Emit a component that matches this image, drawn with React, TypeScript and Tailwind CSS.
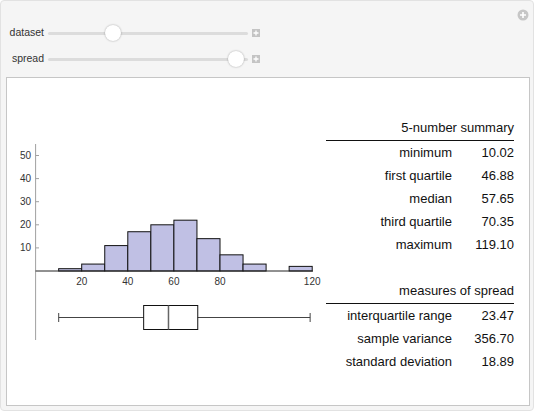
import React from 'react';

// histogram counts per bin of width 10, starting at 10
const counts = [1, 3, 11, 17, 20, 22, 14, 7, 3, 0, 2];

const xs = (v: number) => 35.6 + v * 2.305;
const ys = (v: number) => 271 - v * 2.31;

const summary = [
  ['minimum', '10.02'],
  ['first quartile', '46.88'],
  ['median', '57.65'],
  ['third quartile', '70.35'],
  ['maximum', '119.10'],
];

const spread = [
  ['interquartile range', '23.47'],
  ['sample variance', '356.70'],
  ['standard deviation', '18.89'],
];

const Slider: React.FC<{ label: string; pos: number }> = ({ label, pos }) => (
  <div className="flex items-center h-[26px]">
    <div className="w-[43px] text-right text-[10.5px] text-[#333]">{label}</div>
    <div className="relative ml-[4px] w-[200px] h-[3px] bg-[#dcdcdc] rounded-full">
      <div
        className="absolute top-1/2 w-[16px] h-[16px] -mt-[8px] -ml-[8px] rounded-full bg-white shadow-[0_0_2px_rgba(0,0,0,0.35)]"
        style={{ left: pos }}
      />
    </div>
    <div className="ml-[4px] w-[8px] h-[8px] bg-[#c4c4c4] flex items-center justify-center">
      <svg width="6" height="6" viewBox="0 0 6 6">
        <path d="M3 0.5V5.5M0.5 3H5.5" stroke="#fff" strokeWidth="1.3" />
      </svg>
    </div>
  </div>
);

const Table: React.FC<{ title: string; rows: string[][] }> = ({ title, rows }) => (
  <div className="w-[188px]">
    <div className="h-[24px] leading-[21px] text-right border-b border-[#111]">{title}</div>
    {rows.map(([k, v]) => (
      <div key={k} className="flex h-[23px] items-center">
        <div className="flex-1 text-right">{k}</div>
        <div className="w-[62px] text-right">{v}</div>
      </div>
    ))}
  </div>
);

export default function App() {
  return (
    <div
      className="relative w-[534px] h-[411px] bg-[#f5f5f5] border border-[#e2e2e2] rounded-[4px] pt-[19px]"
      style={{ fontFamily: '"Liberation Sans", Arial, sans-serif' }}
    >
      <div className="absolute right-[4px] top-[8px]">
        <svg width="12" height="12" viewBox="0 0 12 12">
          <circle cx="6" cy="6" r="5.5" fill="#c6c6c6" />
          <path d="M6 3V9M3 6H9" stroke="#fff" strokeWidth="1.6" />
        </svg>
      </div>

      <Slider label="dataset" pos={65} />
      <Slider label="spread" pos={188} />

      <div className="mt-[5px] ml-[5px] w-[524px] h-[329px] bg-white border border-[#c6c6c6] flex text-[13px] text-[#111]">
        <svg width="319" height="327" viewBox="7 78 319 327" className="shrink-0">
          {/* y axis */}
          <line x1="35.6" y1="144" x2="35.6" y2="340" stroke="#a0a0a0" strokeWidth="1" />
          {[10, 20, 30, 40, 50].map((v) => (
            <g key={v}>
              <line x1="35.6" y1={ys(v)} x2="39" y2={ys(v)} stroke="#a0a0a0" strokeWidth="1" />
              <text x="31" y={ys(v) + 3.5} textAnchor="end" fontSize="10" fill="#333">
                {v}
              </text>
            </g>
          ))}
          {/* bars */}
          {counts.map((c, i) =>
            c > 0 ? (
              <rect
                key={i}
                x={xs(10 + i * 10)}
                y={ys(c)}
                width={xs(20) - xs(10)}
                height={271 - ys(c)}
                fill="#c0c0e4"
                stroke="#111"
                strokeWidth="1"
              />
            ) : null
          )}
          {/* x axis */}
          <line x1="35.6" y1="271" x2="313" y2="271" stroke="#222" strokeWidth="1" />
          {[20, 40, 60, 80, 120].map((v) => (
            <text key={v} x={xs(v)} y="284.5" textAnchor="middle" fontSize="10" fill="#333">
              {v}
            </text>
          ))}
          {/* box plot */}
          <g stroke="#444" strokeWidth="1" fill="none">
            <line x1={xs(10.02)} y1="317.5" x2={xs(46.88)} y2="317.5" />
            <line x1={xs(70.35)} y1="317.5" x2={xs(119.1)} y2="317.5" />
            <line x1={xs(10.02)} y1="313" x2={xs(10.02)} y2="322" />
            <line x1={xs(119.1)} y1="313" x2={xs(119.1)} y2="322" />
            <rect x={xs(46.88)} y="305.5" width={xs(70.35) - xs(46.88)} height="24" stroke="#111" />
            <line x1={xs(57.65)} y1="305.5" x2={xs(57.65)} y2="329.5" stroke="#666" strokeWidth="1.5" />
          </g>
        </svg>

        <div className="pt-[39px]">
          <Table title="5-number summary" rows={summary} />
          <div className="h-[24px]" />
          <Table title="measures of spread" rows={spread} />
        </div>
      </div>
    </div>
  );
}
